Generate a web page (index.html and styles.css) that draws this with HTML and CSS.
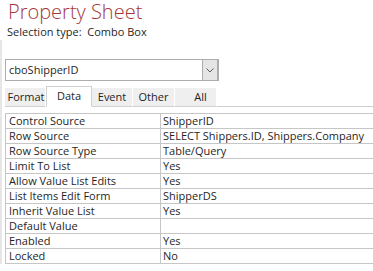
FILE: index.html
```html
<!DOCTYPE html>
<html lang="en">
<head>
    <meta charset="UTF-8">
    <meta name="viewport" content="width=device-width, initial-scale=1.0">
    <title>Property Sheet</title>
    <link rel="stylesheet" href="styles.css">
</head>
<body>
    <div class="sheet-header">
        <h1 class="sheet-title">Property Sheet</h1>
        <p class="selection-type">Selection type:&nbsp; Combo Box</p>
    </div>

    <div class="sheet-pane">
        <div class="object-picker">
            <span class="object-name">cboShipperID</span>
            <span class="picker-button">
                <svg width="8" height="5" viewBox="0 0 8 5">
                    <polyline points="0.5,0.5 4,4 7.5,0.5" fill="none" stroke="#5a5a5a" stroke-width="1"/>
                </svg>
            </span>
        </div>

        <div class="tabs">
            <span class="tab tab-format">Format</span>
            <span class="tab tab-data active">Data</span>
            <span class="tab tab-event">Event</span>
            <span class="tab tab-other">Other</span>
            <span class="tab tab-all">All</span>
        </div>

        <table class="props">
            <tr><td class="prop-name">Control Source</td><td class="prop-value">ShipperID</td></tr>
            <tr><td class="prop-name">Row Source</td><td class="prop-value">SELECT Shippers.ID, Shippers.Company</td></tr>
            <tr><td class="prop-name">Row Source Type</td><td class="prop-value">Table/Query</td></tr>
            <tr><td class="prop-name">Limit To List</td><td class="prop-value">Yes</td></tr>
            <tr><td class="prop-name">Allow Value List Edits</td><td class="prop-value">Yes</td></tr>
            <tr><td class="prop-name">List Items Edit Form</td><td class="prop-value">ShipperDS</td></tr>
            <tr><td class="prop-name">Inherit Value List</td><td class="prop-value">Yes</td></tr>
            <tr><td class="prop-name">Default Value</td><td class="prop-value"></td></tr>
            <tr><td class="prop-name">Enabled</td><td class="prop-value">Yes</td></tr>
            <tr><td class="prop-name">Locked</td><td class="prop-value">No</td></tr>
        </table>
    </div>
</body>
</html>
```

FILE: styles.css
```css
:root {
    --accent-color: #a4373a;
    --text-color: #1f1f1f;
    --grid-color: #c6c6c6;
    --tab-bg: #efefef;
}

* {
    margin: 0;
    padding: 0;
    box-sizing: border-box;
}

body {
    font-family: "Open Sans", "Noto Sans", sans-serif;
    font-size: 11px;
    color: var(--text-color);
    background: #ffffff;
    width: 373px;
    height: 271px;
    overflow: hidden;
}

.sheet-title {
    font-size: 20px;
    font-weight: 300;
    line-height: 24px;
    color: var(--accent-color);
    padding-left: 8px;
}

.selection-type {
    line-height: 16px;
    padding-left: 7px;
}

.sheet-pane {
    border-left: 2px solid #e6e6e6;
    padding-left: 3px;
    padding-top: 19px;
}

.object-picker {
    display: flex;
    align-items: stretch;
    width: 214px;
    height: 22px;
    border: 1px solid #adadad;
}

.object-name {
    flex: 1;
    line-height: 20px;
    padding-left: 3px;
}

.picker-button {
    width: 16px;
    display: flex;
    align-items: center;
    justify-content: center;
    background: #e5e5e5;
    border: 1px solid #adadad;
    margin: -1px 0 -1px 0;
}

.tabs {
    display: flex;
    align-items: flex-end;
    height: 21px;
    margin-top: 5px;
    border-bottom: 1px solid #d0d0d0;
}

.tab {
    height: 19px;
    line-height: 18px;
    text-align: center;
    background: var(--tab-bg);
    border-right: 1px solid #ffffff;
    margin-bottom: -1px;
    border-bottom: 1px solid #d0d0d0;
}

.tab.active {
    height: 21px;
    background: #ffffff;
    border: 1px solid #d0d0d0;
    border-bottom: 1px solid #ffffff;
    line-height: 17px;
}

.tab-format { width: 41px; padding-left: 2px; }
.tab-data { width: 46px; }
.tab-event { width: 41px; }
.tab-other { width: 42px; }
.tab-all { width: 42px; padding-left: 10px; }

.props {
    margin-top: 6px;
    width: 368px;
    border-collapse: collapse;
}

.props td {
    height: 15px;
    line-height: 14px;
    border: 1px solid var(--grid-color);
    border-right: none;
    white-space: nowrap;
    padding: 0;
}

.prop-name {
    width: 155px;
    padding-left: 3px !important;
}

.prop-value {
    padding-left: 2px !important;
}
```
